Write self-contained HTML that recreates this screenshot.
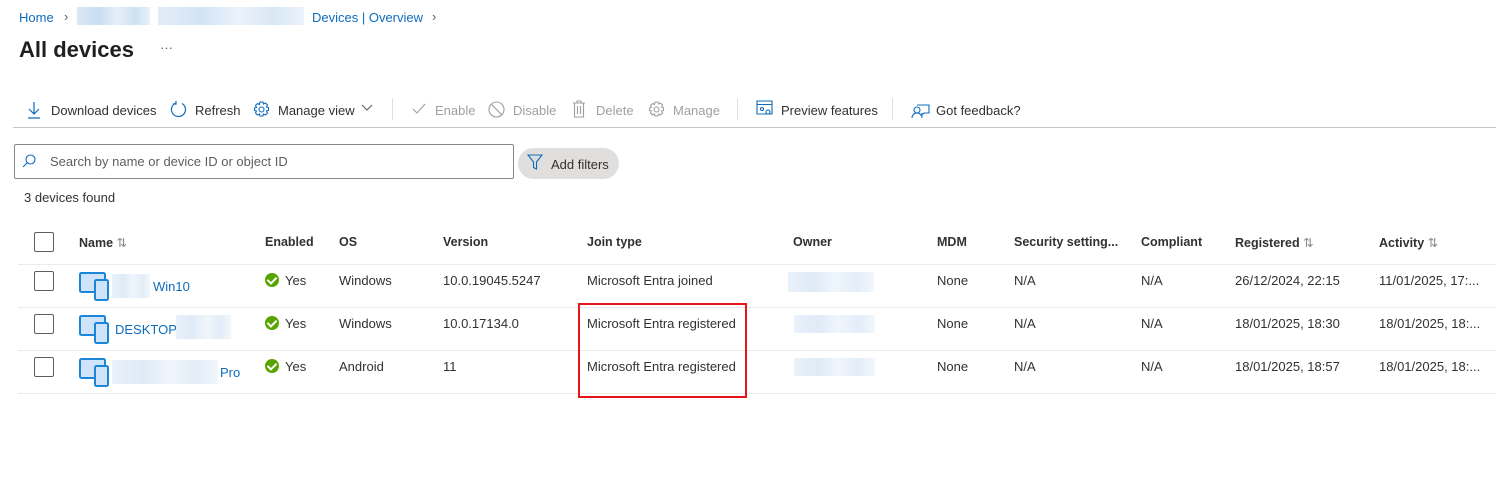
<!DOCTYPE html>
<html><head><style>
*{margin:0;padding:0;box-sizing:border-box}
body{width:1496px;height:490px;background:#fff;font-family:"Liberation Sans",sans-serif;font-size:13px;color:#323130;position:relative;overflow:hidden}
.a{position:absolute;white-space:nowrap}
.blue{color:#0f6cbd}
.g{color:#a19f9d}
.blur{position:absolute;background:linear-gradient(90deg,#dbe8f6,#c9ddf2 30%,#e6eff9 55%,#cfe1f3 80%,#e9f1fa)}
.hl{position:absolute;left:18px;right:0;height:1px;background:#edebe9}
.cb{position:absolute;left:34px;width:20px;height:20px;border:1px solid #605e5c;border-radius:2px}
.th{font-weight:bold;color:#323130;font-size:12.5px}
.chk{display:inline-block;width:14px;height:14px;border-radius:50%;background:#57a300;vertical-align:-2px;margin-right:6px;position:relative}
.chk:after{content:"";position:absolute;left:4px;top:2px;width:4px;height:7px;border:solid #fff;border-width:0 2px 2px 0;transform:rotate(45deg)}
.dev{position:absolute;left:79px;width:32px;height:30px}
</style></head><body>
<div class="a blue" style="left:19px;top:10px">Home</div>
<div class="a" style="left:64px;top:9px;color:#605e5c">›</div>
<div class="blur" style="left:77px;top:7px;width:73px;height:18px"></div>
<div class="blur" style="left:158px;top:7px;width:146px;height:18px;opacity:.8"></div>
<div class="a blue" style="left:312px;top:10px">Devices | Overview</div>
<div class="a" style="left:432px;top:9px;color:#605e5c">›</div>
<div class="a" style="left:19px;top:37px;font-size:22px;font-weight:bold;color:#201f1e">All devices</div>
<div class="a" style="left:160px;top:40px;color:#605e5c">···</div>

<svg class="a" style="left:26px;top:100px" width="16" height="20" viewBox="0 0 16 20" fill="none" stroke="#0f6cbd" stroke-width="1.2"><path d="M8 2v12M3 9l5 5 5-5M2 18h12"/></svg>
<div class="a" style="left:51px;top:103px">Download devices</div>
<svg class="a" style="left:170px;top:100px" width="18" height="18" viewBox="0 0 18 18" fill="none" stroke="#0f6cbd" stroke-width="1.2"><path d="M12 3.5A7 7 0 1 1 6 3M6 1v3H3"/></svg>
<div class="a" style="left:195px;top:103px">Refresh</div>
<svg class="a" style="left:253px;top:101px" width="17" height="17" viewBox="0 0 17 17" fill="none" stroke="#0f6cbd" stroke-width="1.1"><circle cx="8.5" cy="8.5" r="2.5"/><path d="M7 1h3l.5 2 2-1 2 2-1 2 2 .5v3l-2 .5 1 2-2 2-2-1-.5 2H7l-.5-2-2 1-2-2 1-2-2-.5V7l2-.5-1-2 2-2 2 1z"/></svg>
<div class="a" style="left:278px;top:103px">Manage view</div>
<svg class="a" style="left:361px;top:104px" width="12" height="8" viewBox="0 0 12 8" fill="none" stroke="#605e5c" stroke-width="1.1"><path d="M1 1l5 5 5-5"/></svg>
<div class="a" style="left:392px;top:98px;width:1px;height:22px;background:#e1dfdd"></div>
<svg class="a" style="left:412px;top:103px" width="14" height="12" viewBox="0 0 14 12" fill="none" stroke="#a19f9d" stroke-width="1.1"><path d="M1 6l4 4 8-9"/></svg>
<div class="a g" style="left:435px;top:103px">Enable</div>
<svg class="a" style="left:488px;top:101px" width="17" height="17" viewBox="0 0 17 17" fill="none" stroke="#a19f9d" stroke-width="1.1"><circle cx="8.5" cy="8.5" r="7.5"/><path d="M3.2 3.2l10.6 10.6"/></svg>
<div class="a g" style="left:513px;top:103px">Disable</div>
<svg class="a" style="left:572px;top:100px" width="14" height="18" viewBox="0 0 14 18" fill="none" stroke="#a19f9d" stroke-width="1.1"><path d="M1 3h12M5 3V1h4v2M2.5 3v14h9V3M5.5 6v8M8.5 6v8"/></svg>
<div class="a g" style="left:596px;top:103px">Delete</div>
<svg class="a" style="left:648px;top:101px" width="17" height="17" viewBox="0 0 17 17" fill="none" stroke="#a19f9d" stroke-width="1.1"><circle cx="8.5" cy="8.5" r="2.5"/><path d="M7 1h3l.5 2 2-1 2 2-1 2 2 .5v3l-2 .5 1 2-2 2-2-1-.5 2H7l-.5-2-2 1-2-2 1-2-2-.5V7l2-.5-1-2 2-2 2 1z"/></svg>
<div class="a g" style="left:673px;top:103px">Manage</div>
<div class="a" style="left:737px;top:98px;width:1px;height:22px;background:#e1dfdd"></div>
<svg class="a" style="left:756px;top:100px" width="18" height="17" viewBox="0 0 18 17" fill="none" stroke="#0f6cbd" stroke-width="1.1"><path d="M1 1h15v13H1zM1 4.5h15"/><circle cx="6" cy="9" r="1.5"/><circle cx="12" cy="12" r="2"/></svg>
<div class="a" style="left:781px;top:103px">Preview features</div>
<div class="a" style="left:892px;top:98px;width:1px;height:22px;background:#e1dfdd"></div>
<svg class="a" style="left:911px;top:100px" width="19" height="19" viewBox="0 0 19 19" fill="none" stroke="#0f6cbd" stroke-width="1.1"><path d="M6 5h12v8h-5l-2 2v-2"/><circle cx="6" cy="10" r="3"/><path d="M1 18a5 5 0 0 1 10 0"/></svg>
<div class="a" style="left:936px;top:103px">Got feedback?</div>
<div class="a" style="left:13px;top:127px;width:1483px;height:1px;background:#c8c6c4"></div>

<div class="a" style="left:14px;top:144px;width:500px;height:35px;border:1px solid #8a8886;border-radius:2px"></div>
<svg class="a" style="left:22px;top:154px" width="14" height="14" viewBox="0 0 14 14" fill="none" stroke="#0f6cbd" stroke-width="1.1"><circle cx="8.5" cy="5.5" r="4.5"/><path d="M5.3 8.7L1 13"/></svg>
<div class="a" style="left:50px;top:154px;color:#605e5c">Search by name or device ID or object ID</div>
<div class="a" style="left:518px;top:148px;width:101px;height:31px;background:#e1dfdd;border-radius:16px"></div>
<svg class="a" style="left:527px;top:154px" width="16" height="17" viewBox="0 0 16 17" fill="none" stroke="#0f6cbd" stroke-width="1.1"><path d="M1 1h14L9.5 8v7l-3-1.5V8z"/></svg>
<div class="a" style="left:551px;top:157px">Add filters</div>
<div class="a" style="left:24px;top:190px">3 devices found</div>

<div class="cb" style="top:232px"></div>
<div class="a th" style="left:79px;top:235px">Name <span style="font-weight:normal;color:#8a8886">⇅</span></div>
<div class="a th" style="left:265px;top:235px">Enabled</div>
<div class="a th" style="left:339px;top:235px">OS</div>
<div class="a th" style="left:443px;top:235px">Version</div>
<div class="a th" style="left:587px;top:235px">Join type</div>
<div class="a th" style="left:793px;top:235px">Owner</div>
<div class="a th" style="left:937px;top:235px">MDM</div>
<div class="a th" style="left:1014px;top:235px">Security setting...</div>
<div class="a th" style="left:1141px;top:235px">Compliant</div>
<div class="a th" style="left:1235px;top:235px">Registered <span style="font-weight:normal;color:#8a8886">⇅</span></div>
<div class="a th" style="left:1379px;top:235px">Activity <span style="font-weight:normal;color:#8a8886">⇅</span></div>

<div class="hl" style="top:264px"></div>
<div class="hl" style="top:307px"></div>
<div class="hl" style="top:350px"></div>
<div class="hl" style="top:393px"></div>

<div class="cb" style="top:271px"></div>
<svg class="dev" style="top:272px" viewBox="0 0 32 30"><rect x="1" y="1" width="25" height="19" rx="1.5" fill="#cfe4fa" stroke="#1a86d9" stroke-width="2"/><rect x="16" y="8" width="13" height="20" rx="1.5" fill="#cfe4fa" stroke="#1a86d9" stroke-width="2"/></svg>
<div class="blur" style="left:112px;top:274px;width:38px;height:24px;opacity:.6"></div>
<div class="a blue" style="left:153px;top:279px">Win10</div>
<div class="a" style="left:265px;top:273px"><span class="chk"></span>Yes</div>
<div class="a" style="left:339px;top:273px">Windows</div>
<div class="a" style="left:443px;top:273px">10.0.19045.5247</div>
<div class="a" style="left:587px;top:273px">Microsoft Entra joined</div>
<div class="blur" style="left:788px;top:272px;width:86px;height:20px;opacity:.6"></div>

<div class="cb" style="top:314px"></div>
<svg class="dev" style="top:315px" viewBox="0 0 32 30"><rect x="1" y="1" width="25" height="19" rx="1.5" fill="#cfe4fa" stroke="#1a86d9" stroke-width="2"/><rect x="16" y="8" width="13" height="20" rx="1.5" fill="#cfe4fa" stroke="#1a86d9" stroke-width="2"/></svg>
<div class="a blue" style="left:115px;top:322px">DESKTOP</div>
<div class="blur" style="left:176px;top:315px;width:55px;height:24px;opacity:.6"></div>
<div class="a" style="left:265px;top:316px"><span class="chk"></span>Yes</div>
<div class="a" style="left:339px;top:316px">Windows</div>
<div class="a" style="left:443px;top:316px">10.0.17134.0</div>
<div class="a" style="left:587px;top:316px">Microsoft Entra registered</div>
<div class="blur" style="left:794px;top:315px;width:81px;height:18px;opacity:.6"></div>

<div class="cb" style="top:357px"></div>
<svg class="dev" style="top:358px" viewBox="0 0 32 30"><rect x="1" y="1" width="25" height="19" rx="1.5" fill="#cfe4fa" stroke="#1a86d9" stroke-width="2"/><rect x="16" y="8" width="13" height="20" rx="1.5" fill="#cfe4fa" stroke="#1a86d9" stroke-width="2"/></svg>
<div class="blur" style="left:112px;top:360px;width:106px;height:24px;opacity:.6"></div>
<div class="a blue" style="left:220px;top:365px">Pro</div>
<div class="a" style="left:265px;top:359px"><span class="chk"></span>Yes</div>
<div class="a" style="left:339px;top:359px">Android</div>
<div class="a" style="left:443px;top:359px">11</div>
<div class="a" style="left:587px;top:359px">Microsoft Entra registered</div>
<div class="blur" style="left:794px;top:358px;width:81px;height:18px;opacity:.6"></div>

<div class="a" style="left:937px;top:273px">None</div>
<div class="a" style="left:937px;top:316px">None</div>
<div class="a" style="left:937px;top:359px">None</div>
<div class="a" style="left:1014px;top:273px">N/A</div>
<div class="a" style="left:1014px;top:316px">N/A</div>
<div class="a" style="left:1014px;top:359px">N/A</div>
<div class="a" style="left:1141px;top:273px">N/A</div>
<div class="a" style="left:1141px;top:316px">N/A</div>
<div class="a" style="left:1141px;top:359px">N/A</div>
<div class="a" style="left:1235px;top:273px">26/12/2024, 22:15</div>
<div class="a" style="left:1235px;top:316px">18/01/2025, 18:30</div>
<div class="a" style="left:1235px;top:359px">18/01/2025, 18:57</div>
<div class="a" style="left:1379px;top:273px">11/01/2025, 17:...</div>
<div class="a" style="left:1379px;top:316px">18/01/2025, 18:...</div>
<div class="a" style="left:1379px;top:359px">18/01/2025, 18:...</div>

<div class="a" style="left:578px;top:303px;width:169px;height:95px;border:2px solid #e8141c"></div>
</body></html>
